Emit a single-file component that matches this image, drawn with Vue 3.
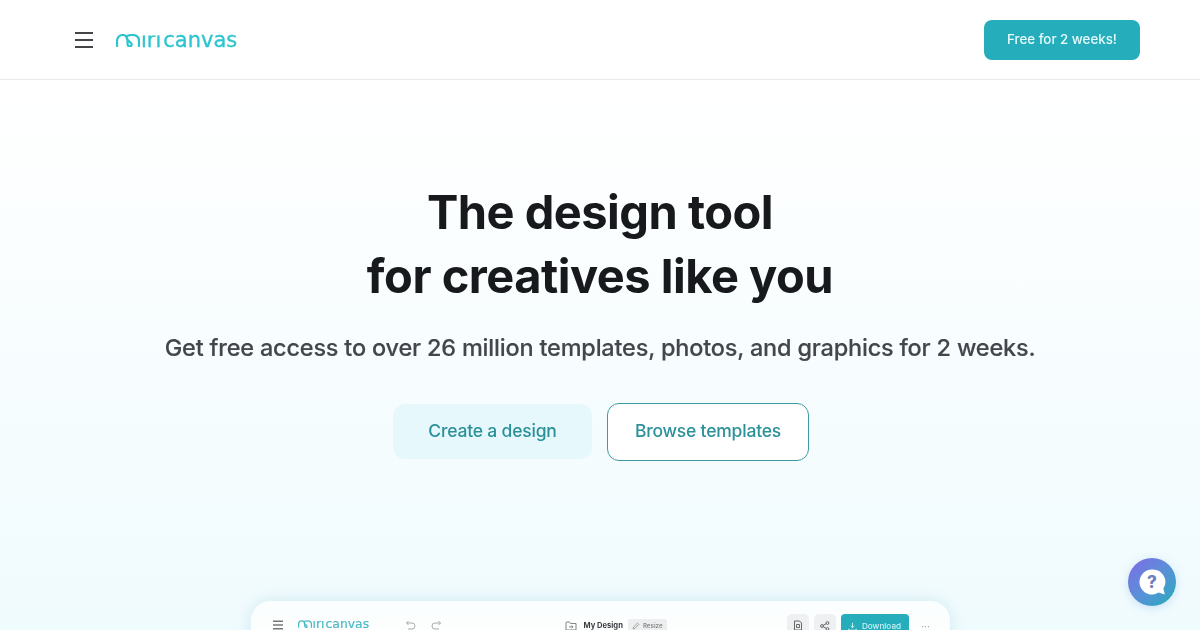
<script setup>
const title = ['The design tool', 'for creatives like you']
const markPath = 'M1 12V7C1 3.5 3.5 1 6.5 1C10 1 11.5 3.5 11.5 7V9.5C11.5 11.2 12.4 12.3 13.8 12.3C15.4 12.3 16 11 15.3 9.6C14.2 7.4 10.5 6.2 10.5 3.8C10.5 2 13 1 16 1C20.5 1 23 3.5 23 7V12'
</script>

<template>
  <div class="page">
    <header class="topbar">
      <div class="brand">
        <button class="menu" aria-label="Menu">
          <span></span><span></span><span></span>
        </button>
        <div class="logo">
          <svg class="logo-mark" width="24" height="13" viewBox="0 0 24 13" fill="none">
            <path :d="markPath" stroke="#2cc5cf" stroke-width="2.2" stroke-linecap="round"/>
          </svg>
          <span class="logo-iri">iri</span>
          <span class="logo-word">canvas</span>
        </div>
      </div>
      <button class="trial"><span class="soft">Free for 2 weeks!</span></button>
    </header>

    <main class="hero">
      <h1 class="title">
        <span v-for="line in title" :key="line">{{ line }}</span>
      </h1>
      <p class="lead">Get free access to over 26 million templates, photos, and graphics for 2 weeks.</p>
      <div class="actions">
        <button class="btn primary"><span class="soft">Create a design</span></button>
        <button class="btn outline"><span class="soft">Browse templates</span></button>
      </div>

      <section class="mock">
        <svg class="mock-menu" width="12" height="10" viewBox="0 0 12 10" fill="none" stroke="#777" stroke-width="1.5">
          <path d="M1 1.2H11M1 5H11M1 8.8H11" />
        </svg>
        <div class="mini-logo">
          <svg width="14" height="8" viewBox="0 0 24 13" fill="none">
            <path :d="markPath" stroke="#4db8c6" stroke-width="2.2" stroke-linecap="round"/>
          </svg>
          <span class="mini-iri">iri</span>
          <span class="mini-word">canvas</span>
        </div>
        <div class="undo">
          <svg width="11" height="10" viewBox="0 0 11 10" fill="none" stroke="#aaa" stroke-width="1">
            <path d="M3.5 1L1.5 3L3.5 5M1.5 3H7A2.6 2.6 0 0 1 7 9H3" />
          </svg>
          <svg width="11" height="10" viewBox="0 0 11 10" fill="none" stroke="#aaa" stroke-width="1">
            <path d="M7.5 1L9.5 3L7.5 5M9.5 3H4A2.6 2.6 0 0 0 4 9H8" />
          </svg>
        </div>
        <div class="doc-group">
          <svg width="12" height="10" viewBox="0 0 12 10" fill="none" stroke="#777" stroke-width="0.9">
            <path d="M1 2V9H11V2.5H5.5L4.5 1H1.5Z M4 5.8H8M6.6 4.4L8 5.8L6.6 7.2" />
          </svg>
          <span class="doc">My Design</span>
          <span class="resize">
            <svg width="8" height="8" viewBox="0 0 7 7" fill="none" stroke="#999" stroke-width="0.8"><path d="M1 6L1.4 4.4L4.8 1L6 2.2L2.6 5.6Z" /></svg>
            Resize
          </span>
        </div>
        <div class="tools">
          <span class="square">
            <svg width="10" height="11" viewBox="0 0 10 11" fill="none" stroke="#666" stroke-width="1"><path d="M1.5 1H6.5L8.5 3V10H1.5Z M3.5 4.5H6.5V7.5H3.5Z" /></svg>
          </span>
          <span class="square">
            <svg width="10" height="10" viewBox="0 0 10 10" fill="none" stroke="#666" stroke-width="1"><circle cx="2" cy="5" r="1.4"/><circle cx="7.5" cy="2" r="1.4"/><circle cx="7.5" cy="8" r="1.4"/><path d="M3.2 4.3L6.2 2.7M3.2 5.7L6.2 7.3"/></svg>
          </span>
          <span class="download">
            <svg width="9" height="9" viewBox="0 0 9 9" fill="none" stroke="#d8f5f7" stroke-width="0.9"><path d="M4.5 0.8V5.6M2.6 3.8L4.5 5.7L6.4 3.8M0.8 6.6V8.2H8.2V6.6" /></svg>
            Download
          </span>
          <span class="dots">···</span>
        </div>
      </section>
    </main>

    <div class="chat">
      <svg width="36" height="36" viewBox="0 0 36 36">
        <path d="M18 5.5A12.5 12.5 0 1 0 24.6 28.6L30.8 30.4L29.4 24.6A12.5 12.5 0 0 0 18 5.5Z" fill="#fff"/>
        <text x="18" y="24.4" text-anchor="middle" class="chat-q">?</text>
      </svg>
    </div>
  </div>
</template>

<style>
html, body { margin: 0; background: #fff; overflow: hidden; }
</style>

<style scoped>
.page {
  position: relative;
  width: 1200px;
  height: 630px;
  overflow: hidden;
  font-family: Inter, "Liberation Sans", sans-serif;
  background: #fff;
}
button { font-family: inherit; cursor: pointer; }
.soft { display: inline-block; filter: blur(0.2px); }
.topbar {
  box-sizing: border-box;
  height: 80px;
  padding: 0 60px 0 75px;
  display: flex;
  align-items: center;
  justify-content: space-between;
  background: #fff;
  border-bottom: 1px solid #e9eaec;
}
.brand { display: flex; align-items: center; gap: 23px; }
.menu {
  width: 18px;
  height: 16px;
  padding: 0;
  border: 0;
  background: none;
  display: flex;
  flex-direction: column;
  justify-content: space-between;
}
.menu span { display: block; height: 2px; background: #434548; }
.logo {
  display: flex;
  align-items: center;
  color: #2cc5cf;
  font-family: "DejaVu Sans", sans-serif;
  font-size: 21px;
  line-height: 24px;
  -webkit-text-stroke: 0.3px #2cc5cf;
  filter: blur(0.3px);
}
.logo-mark { margin-top: 1px; margin-right: 1px; }
.logo-iri { clip-path: inset(8px 0 0 0); margin-right: 2px; }
.trial {
  width: 156px;
  height: 40px;
  border: 0;
  border-radius: 8px;
  background: #25adbb;
  color: #e6fbfc;
  font-size: 13.3px;
  font-weight: 500;
  padding: 0 0 1px;
}
.hero {
  height: 550px;
  display: flex;
  flex-direction: column;
  align-items: center;
  background: linear-gradient(180deg, #ffffff 0%, #f0fbfe 100%);
}
.title {
  margin: 100px 0 0;
  display: flex;
  flex-direction: column;
  align-items: center;
  font-size: 47px;
  line-height: 64px;
  font-weight: 700;
  letter-spacing: -0.5px;
  color: #17191c;
  filter: blur(0.2px);
}
.lead {
  margin: 22px 0 0;
  font-size: 23.5px;
  line-height: 36px;
  font-weight: 500;
  letter-spacing: -0.2px;
  color: #43464b;
  filter: blur(0.2px);
  -webkit-text-stroke: 0.15px #43464b;
}
.actions {
  margin: 37px 0 0 2px;
  display: flex;
  align-items: flex-start;
  gap: 15px;
}
.btn {
  box-sizing: border-box;
  font-size: 17.5px;
  font-weight: 500;
  letter-spacing: -0.2px;
  color: #2b9199;
  border-radius: 12px;
  padding: 0 0 2px;
}
.primary {
  width: 199px;
  height: 55px;
  margin-top: 1px;
  border: 0;
  background: #e6f8fc;
}
.outline {
  width: 202px;
  height: 58px;
  border: 1px solid #3f9ba3;
  background: #fff;
  padding-bottom: 3px;
}
.mock {
  box-sizing: border-box;
  width: 699px;
  height: 80px;
  margin-top: 140px;
  flex: none;
  padding: 12px 16px 0 21px;
  display: flex;
  align-items: flex-start;
  background: linear-gradient(180deg, #fbfefe, #ffffff);
  border-radius: 20px;
  box-shadow: 0 0 16px rgba(90, 170, 180, 0.22);
}
.mock > * { filter: blur(0.35px); }
.mock-menu { margin-top: 7px; flex: none; }
.mini-logo {
  margin: 5px 0 0 14px;
  width: 84px;
  display: flex;
  align-items: center;
  font-family: "DejaVu Sans", sans-serif;
  font-size: 12.4px;
  line-height: 12px;
  color: #4db8c6;
  -webkit-text-stroke: 0.2px #4db8c6;
  flex: none;
}
.mini-iri { clip-path: inset(3px 0 0 0); margin: 0 1px 0 1px; }
.undo { margin: 7px 0 0 23px; display: flex; gap: 15px; flex: none; }
.doc-group {
  margin: 7px 0 0 123px;
  display: flex;
  align-items: center;
  gap: 7px;
  height: 11px;
  flex: none;
}
.doc { font-size: 7.6px; font-weight: 700; color: #3a3c40; }
.resize {
  display: flex;
  align-items: center;
  gap: 3px;
  height: 13px;
  padding: 0 4px;
  font-size: 6.2px;
  font-weight: 600;
  color: #888;
  background: #eceeef;
  border-radius: 2px;
  margin-left: -2px;
}
.tools {
  margin-left: auto;
  display: flex;
  align-items: center;
  gap: 5px;
  flex: none;
}
.square {
  width: 22px;
  height: 24px;
  display: flex;
  align-items: center;
  justify-content: center;
  background: #eef0f1;
  border-radius: 5px;
  flex: none;
}
.download {
  width: 68px;
  height: 24px;
  display: flex;
  align-items: center;
  justify-content: center;
  gap: 5px;
  background: #25adbb;
  color: #c9f1f4;
  font-size: 8.2px;
  font-weight: 500;
  border-radius: 4px;
  flex: none;
  margin-top: 1px;
}
.dots { margin-left: 4px; width: 16px; color: #999; font-size: 10px; text-align: center; flex: none; }
.chat {
  position: absolute;
  left: 1128px;
  top: 558px;
  width: 48px;
  height: 48px;
  border-radius: 50%;
  display: flex;
  align-items: center;
  justify-content: center;
  background: linear-gradient(135deg, #7f6be6 0%, #5b8fd8 50%, #25adbb 100%);
  box-shadow: 0 2px 10px rgba(90, 150, 220, 0.25);
}
.chat-q { font-family: Inter, sans-serif; font-size: 17px; font-weight: 800; fill: #6f7fbf; }
</style>
